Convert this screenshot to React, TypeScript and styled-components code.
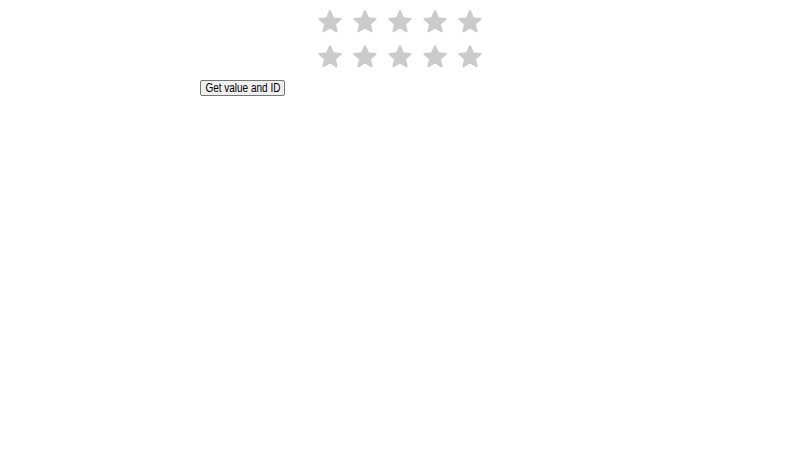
import React from "react";
import styled, { createGlobalStyle } from "styled-components";

const Global = createGlobalStyle`
  html, body { margin: 0; padding: 0; background: #fff; }
  body { font-family: "Liberation Sans", Arial, sans-serif; }
`;

const Page = styled.div`
  display: flex;
  flex-direction: column;
  padding-top: 4px;
`;

const StarRow = styled.div`
  display: flex;
  justify-content: center;
  align-items: center;
  gap: 9px;
  height: 35px;
`;

const StarIcon = styled.svg`
  width: 26px;
  height: 26px;
  display: block;
`;

const Actions = styled.div`
  display: flex;
  padding-left: 200px;
  margin-top: 6px;
`;

const Button = styled.button`
  display: flex;
  align-items: center;
  justify-content: center;
  height: 16px;
  width: 85px;
  padding: 0;
  border: 1px solid #767676;
  border-radius: 2px;
  background: #efefef;
  color: #000;
  font-family: "Liberation Sans", Arial, sans-serif;
  font-size: 12.5px;
  line-height: 14px;
  white-space: nowrap;
  cursor: pointer;
`;

/* condensed caption, the button face is narrow */
const Caption = styled.span`
  display: inline-block;
  transform: scaleX(0.8);
  transform-origin: center;
  margin: 0 -12px;
`;

const Star = () => (
  <StarIcon viewBox="0 0 26 26">
    <path
      d="M13 2.2 L16.1 9.2 L23.6 9.9 L17.9 14.9 L19.6 22.3 L13 18.4 L6.4 22.3 L8.1 14.9 L2.4 9.9 L9.9 9.2 Z"
      fill="#cbcbcb"
      stroke="#cbcbcb"
      strokeWidth="2"
      strokeLinejoin="round"
    />
  </StarIcon>
);

const Rating = () => (
  <StarRow>
    {[0, 1, 2, 3, 4].map((i) => (
      <Star key={i} />
    ))}
  </StarRow>
);

export default function App() {
  return (
    <>
      <Global />
      <Page>
        <Rating />
        <Rating />
        <Actions>
          <Button type="button">
            <Caption>Get value and ID</Caption>
          </Button>
        </Actions>
      </Page>
    </>
  );
}
